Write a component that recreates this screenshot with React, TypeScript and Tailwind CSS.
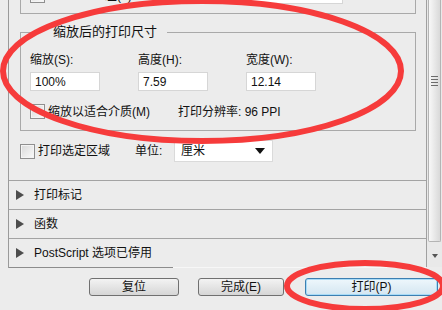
function Checkbox() {
  return (
    <div className="w-[15px] h-[15px] shrink-0 border border-[#8f8f8f] bg-linear-to-br from-[#d9d9d9] to-[#fbfbfb] shadow-[inset_0_0_0_1px_#f4f4f4]" />
  );
}

function Field({ label, value }: { label: string; value: string }) {
  return (
    <div className="w-[108px] flex flex-col">
      <span className="leading-[16px]">{label}</span>
      <div className="mt-[4px] w-[70px] h-[19px] bg-white border border-[#d6d6d6] pl-[4px] flex items-center">
        {value}
      </div>
    </div>
  );
}

function Section({ title }: { title: string }) {
  return (
    <div className="h-[29px] border-t border-[#a3a3a3] flex items-center pl-[7px]">
      <div className="w-0 h-0 border-y-[5px] border-y-transparent border-l-[8px] border-l-[#4d4d4d]" />
      <span className="ml-[10px] leading-[16px]">{title}</span>
    </div>
  );
}

export default function App() {
  return (
    <div className="relative w-[442px] h-[310px] overflow-hidden bg-[#ececec] text-[12px] text-[#111] font-['Liberation_Sans','Noto_Sans_CJK_SC',sans-serif]">
      <div className="flex h-[268px]">
        {/* main panel */}
        <div className="w-[426px] pl-[8px]">
          <div className="h-[268px] border-l border-[#9a9a9a] flex flex-col">
            {/* clipped group at the top */}
            <div className="ml-[11px] w-[396px] h-[14px] border-x border-b border-[#a9a9a9] overflow-hidden">
              <div className="-mt-[13px] h-[17px] flex items-center pl-[9px]">
                <Checkbox />
                <span className="ml-[60px] leading-[16px]">左(L):</span>
                <div className="ml-[96px] w-[112px] h-[17px] bg-white border border-[#d6d6d6]" />
              </div>
            </div>

            {/* scaled print size */}
            <fieldset className="ml-[11px] mt-[10px] w-[396px] border border-[#a9a9a9] px-[9px] pt-[12px] pb-[11px]">
              <legend className="ml-[3px] pl-[20px] pr-[10px] text-[13px] leading-[16px]">
                缩放后的打印尺寸
              </legend>
              <div className="flex">
                <Field label="缩放(S):" value="100%" />
                <Field label="高度(H):" value="7.59" />
                <Field label="宽度(W):" value="12.14" />
              </div>
              <div className="mt-[13px] h-[15px] flex items-center">
                <div className="w-[148px] flex items-center">
                  <Checkbox />
                  <span className="ml-[3px] leading-[16px]">缩放以适合介质(M)</span>
                </div>
                <span className="leading-[16px]">打印分辨率: 96 PPI</span>
              </div>
            </fieldset>

            {/* selection + unit */}
            <div className="mt-[9px] h-[22px] flex items-center">
              <div className="ml-[11px] w-[115px] flex items-center">
                <Checkbox />
                <span className="ml-[3px] leading-[16px]">打印选定区域</span>
              </div>
              <span className="w-[39px] leading-[16px]">单位:</span>
              <div className="w-[99px] h-[22px] bg-white border border-[#dadada] flex items-center justify-between pl-[6px] pr-[7px]">
                <span className="leading-[16px]">厘米</span>
                <div className="w-0 h-0 border-x-[5px] border-x-transparent border-t-[6px] border-t-[#111]" />
              </div>
            </div>

            <div className="mt-[18px]">
              <Section title="打印标记" />
              <Section title="函数" />
              <Section title="PostScript 选项已停用" />
            </div>
            <div className="flex h-[1px]">
              <div className="w-[164px] bg-[#8c8c8c]" />
              <div className="flex-1 bg-[#f7f7f7]" />
            </div>
          </div>
        </div>

        {/* scrollbar */}
        <div className="w-[16px] h-[267px] border-l border-[#a0a0a0] bg-[#e9e9e9] flex flex-col">
          <div className="ml-[1px] w-[13px] h-[242px] border border-t-0 border-[#b4b4b4] rounded-b-[2px] bg-linear-to-r from-[#f8f8f8] to-[#d9d9d9] flex flex-col items-center">
            <div className="mt-[76px] flex flex-col gap-[2px]">
              <div className="w-[7px] h-[1px] bg-[#6b6b6b]" />
              <div className="w-[7px] h-[1px] bg-[#6b6b6b]" />
              <div className="w-[7px] h-[1px] bg-[#6b6b6b]" />
              <div className="w-[7px] h-[1px] bg-[#6b6b6b]" />
            </div>
          </div>
          <div className="mt-[12px] self-center w-0 h-0 border-x-[3px] border-x-transparent border-t-[4px] border-t-[#555]" />
        </div>
      </div>

      {/* buttons */}
      <div className="mt-[10px] flex pl-[89px]">
        <button className="w-[90px] h-[18px] border border-[#707070] rounded-[3px] bg-linear-to-b from-[#f3f3f3] to-[#d6d6d6] flex items-center justify-center leading-none">
          复位
        </button>
        <button className="ml-[19px] w-[86px] h-[18px] border border-[#707070] rounded-[3px] bg-linear-to-b from-[#f3f3f3] to-[#d6d6d6] flex items-center justify-center leading-none">
          完成(E)
        </button>
        <button className="ml-[21px] w-[133px] h-[18px] border border-[#3c7fb1] rounded-[3px] bg-linear-to-b from-[#eef7fc] to-[#d4e6f1] shadow-[inset_0_0_0_1px_#a8dbf7] flex items-center justify-center leading-none">
          打印(P)
        </button>
      </div>

      {/* red hand-drawn marks */}
      <svg className="absolute left-0 top-0 pointer-events-none" width="442" height="310">
        <ellipse cx="202" cy="71" rx="199" ry="70" fill="none" stroke="#f63b3b" strokeWidth="6" />
        <ellipse cx="365" cy="286" rx="78" ry="23" fill="none" stroke="#f63b3b" strokeWidth="6" />
      </svg>
    </div>
  );
}
